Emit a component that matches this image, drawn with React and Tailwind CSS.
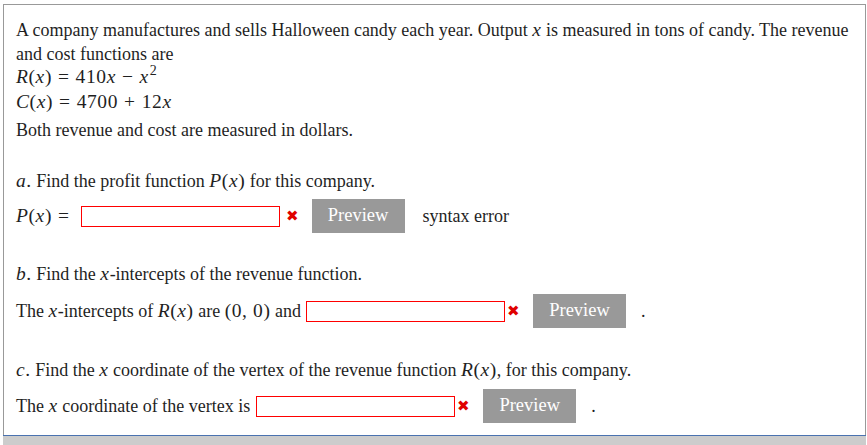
import React from "react"

function V({ children }) {
  return <span className="italic">{children}</span>
}

function M({ children }) {
  return <span className="text-[19.5px] leading-[20px] tracking-[0.6px] whitespace-nowrap">{children}</span>
}

function Op({ children }) {
  return <span className="mx-[6px]">{children}</span>
}

function Answer({ gap, btn }) {
  return (
    <>
      <input type="text" className="w-[199px] h-[21px] border border-[#ff0000] bg-white outline-none" />
      <span className={`text-[#e00000] text-[15px] leading-none ${gap}`}>✖</span>
      <button className={`${btn} w-[93px] h-[34px] bg-[#999999] text-white text-[18.5px]`}>Preview</button>
    </>
  )
}

export default function App() {
  return (
    <div className="w-full h-[445px] overflow-hidden bg-white text-[#1f1f1f] font-['Liberation_Serif',serif] text-[18px]">
      <div className="pt-[4px] pl-[3px] pr-[1px]">
        <div className="h-[431px] border-t border-l border-r border-[#999] px-[12px] pt-[13px]">
          <div className="leading-[24px]">
            A company manufactures and sells Halloween candy each year. Output <M><V>x</V></M> is measured in tons of candy. The revenue and cost functions are
          </div>
          <div className="h-[23px] flex items-center">
            <M><V>R</V>(<V>x</V>)<Op>=</Op>410<V>x</V><Op>−</Op><V>x</V><span className="inline-block text-[14px] relative -top-[8px] ml-[1px]">2</span></M>
          </div>
          <div className="h-[25px] flex items-center">
            <M><V>C</V>(<V>x</V>)<Op>=</Op>4700<Op>+</Op>12<V>x</V></M>
          </div>
          <div className="mt-[4px] leading-[24px]">Both revenue and cost are measured in dollars.</div>

          <div className="mt-[27px] leading-[24px]">
            <M><V>a</V>.</M> Find the profit function <M><V>P</V>(<V>x</V>)</M> for this company.
          </div>
          <div className="mt-[6px] h-[34px] flex items-center">
            <M><V>P</V>(<V>x</V>)<Op>=</Op></M>
            <span className="ml-[5px]" />
            <Answer gap="ml-[6px]" btn="ml-[13px]" />
            <span className="ml-[18px]">syntax error</span>
          </div>

          <div className="mt-[29px] leading-[24px]">
            <M><V>b</V>.</M> Find the <M><V>x</V></M>-intercepts of the revenue function.
          </div>
          <div className="mt-[8px] h-[34px] flex items-center">
            <span>The <M><V>x</V></M>-intercepts of <M><V>R</V>(<V>x</V>)</M> are <M>(0, 0)</M> and</span>
            <span className="ml-[5px]" />
            <Answer gap="ml-[2px]" btn="ml-[13px]" />
            <span className="ml-[15px]">.</span>
          </div>

          <div className="mt-[30px] leading-[24px]">
            <M><V>c</V>.</M> Find the <M><V>x</V></M> coordinate of the vertex of the revenue function <M><V>R</V>(<V>x</V>)</M>, for this company.
          </div>
          <div className="mt-[7px] h-[34px] flex items-center">
            <span>The <M><V>x</V></M> coordinate of the vertex is</span>
            <span className="ml-[6px]" />
            <Answer gap="ml-[2px]" btn="ml-[13px]" />
            <span className="ml-[15px]">.</span>
          </div>
        </div>
      </div>
      <div className="ml-[3px] mr-[1px] h-[20px] border-t border-[#4a72b0] bg-[#cccccc]" />
    </div>
  )
}
